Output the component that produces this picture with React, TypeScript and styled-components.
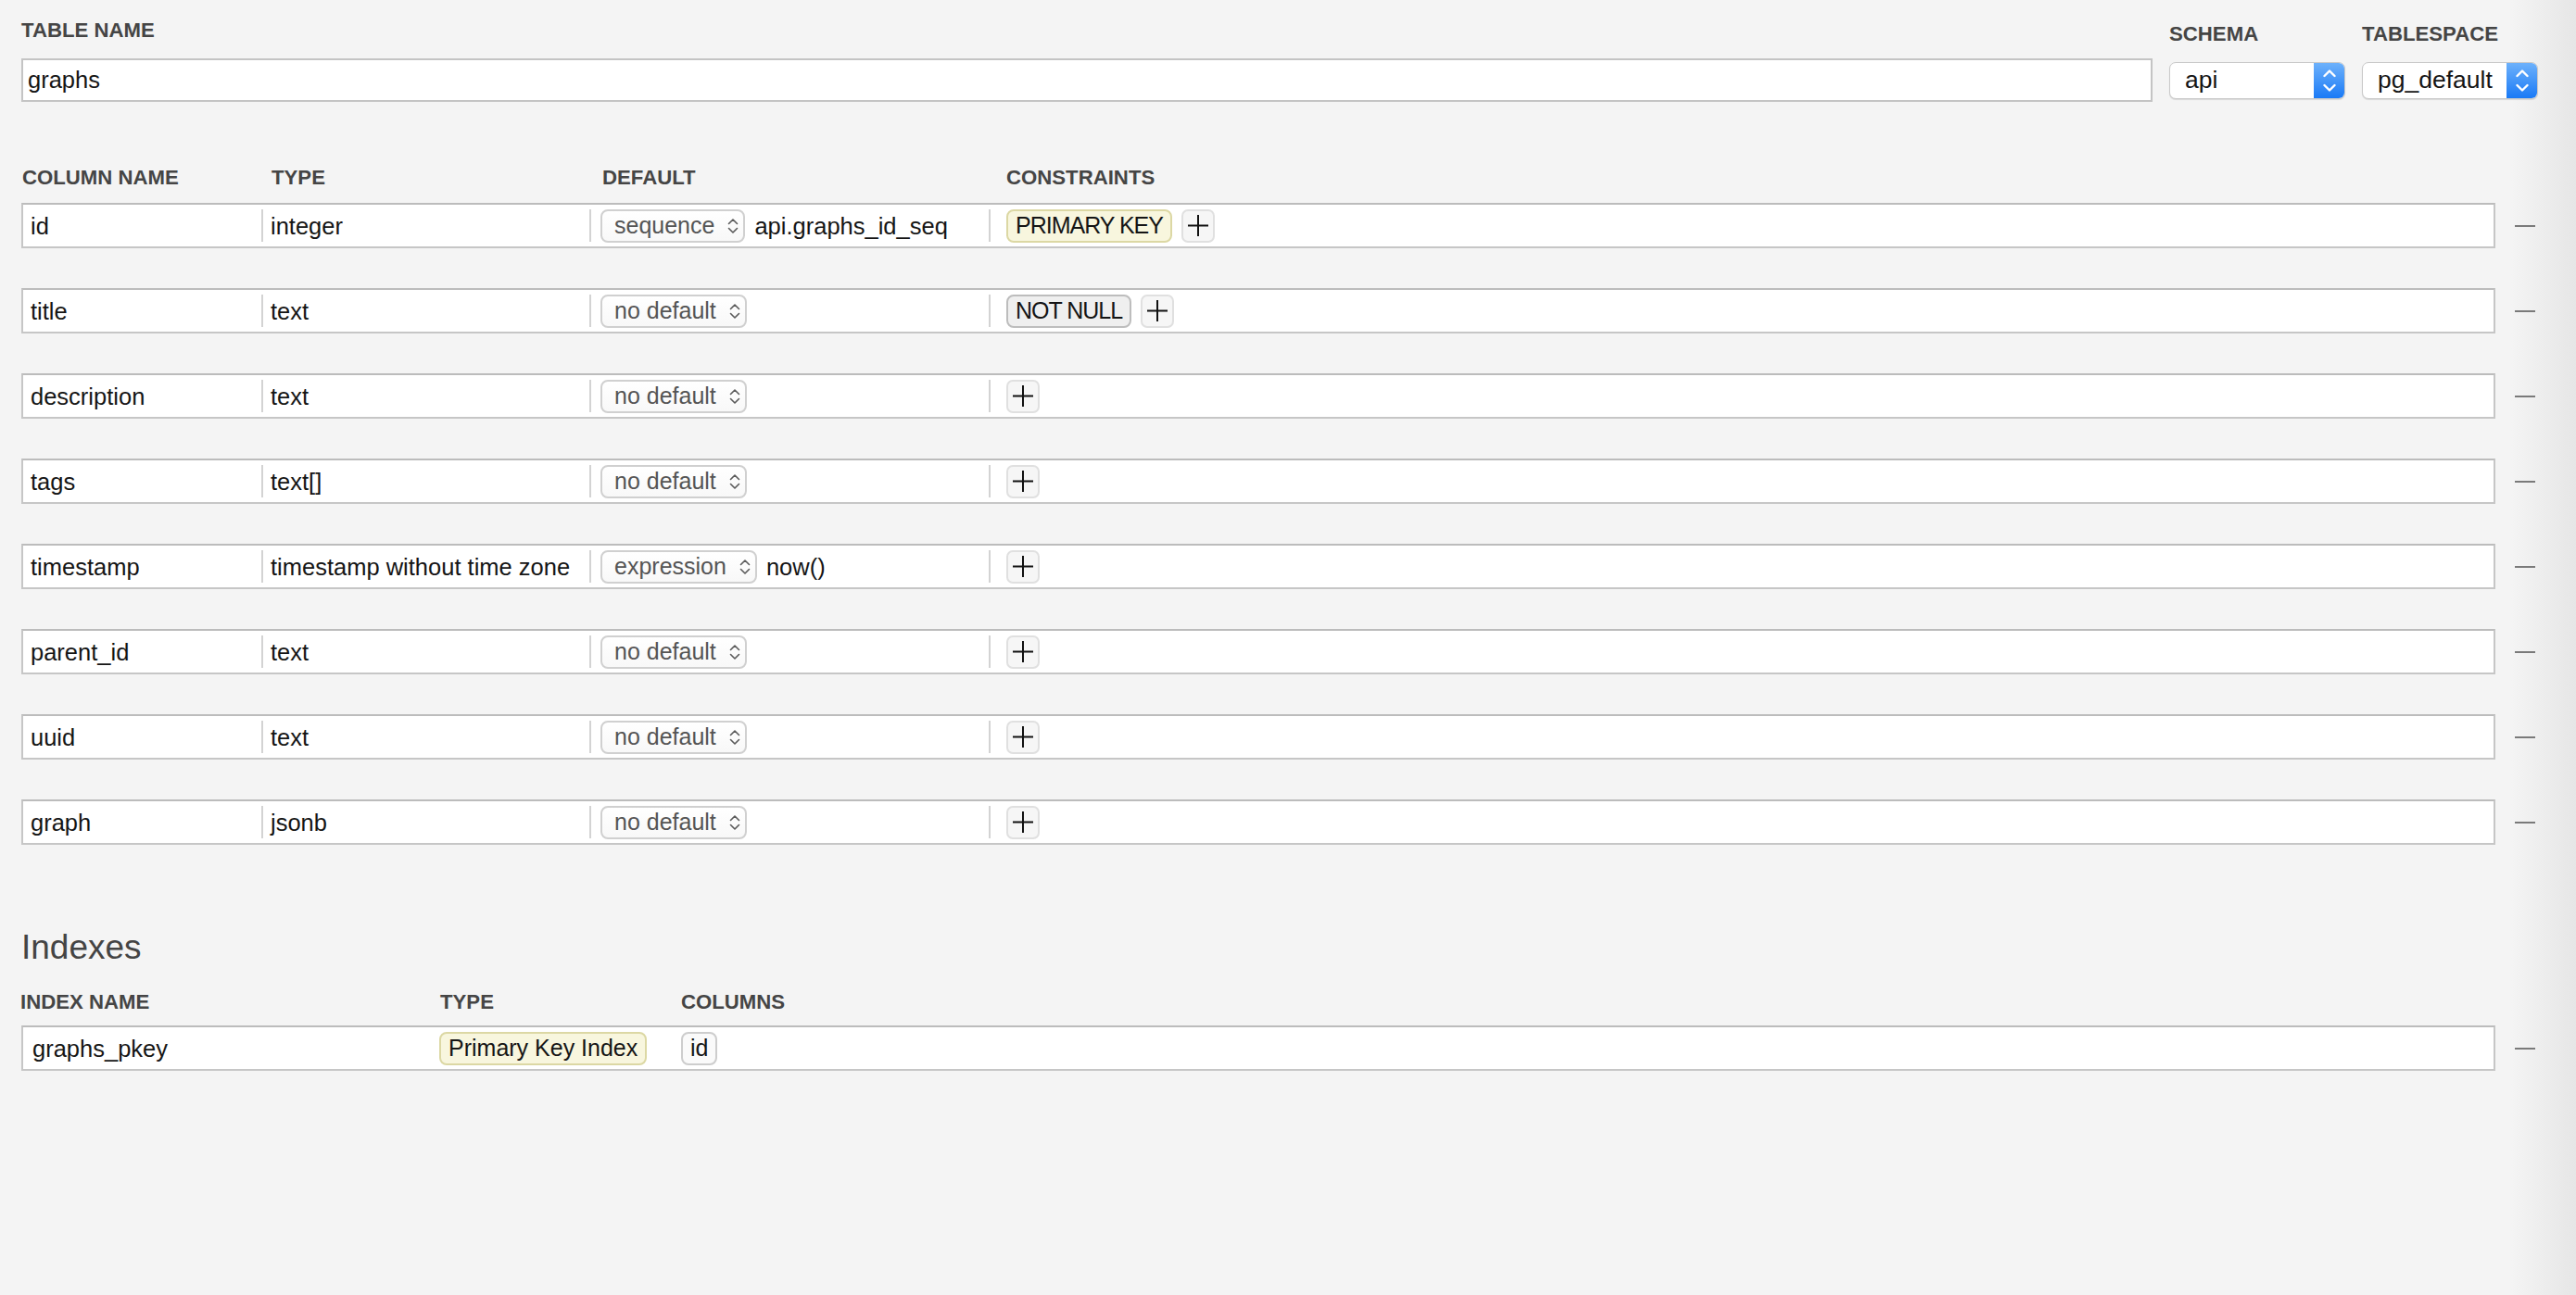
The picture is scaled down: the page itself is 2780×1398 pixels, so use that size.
import React from 'react';
import { styled, createGlobalStyle, css } from 'styled-components';

type Tone = 'key' | 'neutral' | 'plain';

type Constraint = {
    text: string;
    tone: Tone;
};

type ColumnDef = {
    name: string;
    type: string;
    defaultKind: string;
    defaultValue?: string;
    constraints: Constraint[];
};

const columns: ColumnDef[] = [
    { name: 'id', type: 'integer', defaultKind: 'sequence', defaultValue: 'api.graphs_id_seq', constraints: [{ text: 'PRIMARY KEY', tone: 'key' }] },
    { name: 'title', type: 'text', defaultKind: 'no default', constraints: [{ text: 'NOT NULL', tone: 'neutral' }] },
    { name: 'description', type: 'text', defaultKind: 'no default', constraints: [] },
    { name: 'tags', type: 'text[]', defaultKind: 'no default', constraints: [] },
    { name: 'timestamp', type: 'timestamp without time zone', defaultKind: 'expression', defaultValue: 'now()', constraints: [] },
    { name: 'parent_id', type: 'text', defaultKind: 'no default', constraints: [] },
    { name: 'uuid', type: 'text', defaultKind: 'no default', constraints: [] },
    { name: 'graph', type: 'jsonb', defaultKind: 'no default', constraints: [] },
];

const GlobalStyle = createGlobalStyle`
    html, body {
        margin: 0;
        padding: 0;
    }
    body {
        background: linear-gradient(to right, #f4f4f4 0, #f4f4f4 calc(100% - 70px), #e6e6e6 100%);
        font-family: "Liberation Sans", Arial, sans-serif;
        color: #151515;
    }
`;

const SmallChevrons = () => (
    <svg width="12" height="18" viewBox="0 0 12 18" fill="none" stroke="#5a5a5a" strokeWidth="1.6" strokeLinecap="round" strokeLinejoin="round">
        <polyline points="1.5,6.5 6,2 10.5,6.5" />
        <polyline points="1.5,11.5 6,16 10.5,11.5" />
    </svg>
);

const WhiteChevrons = () => (
    <svg width="14" height="26" viewBox="0 0 14 26" fill="none" stroke="#ffffff" strokeWidth="2.4" strokeLinecap="round" strokeLinejoin="round">
        <polyline points="1.5,8 7,2.5 12.5,8" />
        <polyline points="1.5,18 7,23.5 12.5,18" />
    </svg>
);

const PlusIcon = () => (
    <svg width="22" height="23" viewBox="0 0 22 23" stroke="#111" strokeWidth="2">
        <line x1="0" y1="11.5" x2="22" y2="11.5" />
        <line x1="11" y1="0" x2="11" y2="23" />
    </svg>
);

export default function App() {
    return (
        <>
            <GlobalStyle />
            <Page>
                <TopBar>
                    <Field $grow>
                        <Label>TABLE NAME</Label>
                        <TextInput>graphs</TextInput>
                    </Field>
                    <Field>
                        <Label>SCHEMA</Label>
                        <PopUp>
                            <PopUpValue>api</PopUpValue>
                            <PopUpArrow><WhiteChevrons /></PopUpArrow>
                        </PopUp>
                    </Field>
                    <Field>
                        <Label>TABLESPACE</Label>
                        <PopUp>
                            <PopUpValue>pg_default</PopUpValue>
                            <PopUpArrow><WhiteChevrons /></PopUpArrow>
                        </PopUp>
                    </Field>
                </TopBar>

                <ColumnHeader>
                    <Label>COLUMN NAME</Label>
                    <Label>TYPE</Label>
                    <Label>DEFAULT</Label>
                    <Label>CONSTRAINTS</Label>
                </ColumnHeader>

                <RowList>
                    {columns.map((column) => (
                        <Line key={column.name}>
                            <ColumnRow>
                                <Cell $inset={8} $divider>{column.name}</Cell>
                                <Cell $inset={8} $divider>{column.type}</Cell>
                                <Cell $inset={10} $divider>
                                    <SmallSelect>
                                        <span>{column.defaultKind}</span>
                                        <SmallChevrons />
                                    </SmallSelect>
                                    {column.defaultValue && <span>{column.defaultValue}</span>}
                                </Cell>
                                <Cell $inset={17}>
                                    {column.constraints.map((c) => (
                                        <Chip key={c.text} $tone={c.tone} $caps>{c.text}</Chip>
                                    ))}
                                    <AddButton><PlusIcon /></AddButton>
                                </Cell>
                            </ColumnRow>
                            <RemoveButton><Minus /></RemoveButton>
                        </Line>
                    ))}
                </RowList>

                <SectionTitle>Indexes</SectionTitle>

                <IndexHeader>
                    <Label>INDEX NAME</Label>
                    <Label>TYPE</Label>
                    <Label>COLUMNS</Label>
                </IndexHeader>

                <IndexLine>
                    <IndexRow>
                        <Cell $inset={10}>graphs_pkey</Cell>
                        <Cell $inset={0}><Chip $tone="key">Primary Key Index</Chip></Cell>
                        <Cell $inset={0}><Chip $tone="plain">id</Chip></Cell>
                    </IndexRow>
                    <RemoveButton><Minus /></RemoveButton>
                </IndexLine>
            </Page>
        </>
    );
}

const Page = styled.div`
    min-height: 100vh;
    box-sizing: border-box;
    padding: 20px 41px 40px 23px;
    font-size: 25.5px;
`;

const TopBar = styled.div`
    display: flex;
    align-items: center;
    gap: 18px;
`;

const Field = styled.div<{ $grow?: boolean }>`
    display: flex;
    flex-direction: column;
    gap: 17px;
    ${({ $grow }) => $grow ? css`flex: 1;` : css`width: 190px;`}
`;

const Label = styled.div`
    font-size: 22.2px;
    line-height: 26px;
    font-weight: bold;
    color: #454545;
    white-space: nowrap;
`;

const TextInput = styled.div`
    height: 47px;
    box-sizing: border-box;
    border: 2px solid #c4c4c4;
    background: #ffffff;
    padding: 0 5px;
    display: flex;
    align-items: center;
    font-size: 25.5px;
    color: #151515;
`;

const PopUp = styled.div`
    height: 40px;
    box-sizing: border-box;
    display: flex;
    border: 1px solid #c9c9c9;
    border-radius: 7px;
    background: #ffffff;
    box-shadow: 0 1px 1px rgba(0, 0, 0, 0.12);
    overflow: hidden;
`;

const PopUpValue = styled.div`
    flex: 1;
    padding-left: 16px;
    display: flex;
    align-items: center;
    font-size: 26.5px;
    color: #151515;
`;

const PopUpArrow = styled.div`
    width: 33px;
    display: flex;
    align-items: center;
    justify-content: center;
    background: linear-gradient(to bottom, #6db1fb, #1a7af6);
`;

const ColumnHeader = styled.div`
    margin-top: 69px;
    display: grid;
    grid-template-columns: 269px 357px 436px 1fr;
    padding-left: 1px;
`;

const RowList = styled.div`
    margin-top: 14px;
    display: flex;
    flex-direction: column;
    gap: 43px;
`;

const Line = styled.div`
    display: flex;
    align-items: center;
`;

const RowBox = styled.div`
    flex: 1;
    height: 49px;
    box-sizing: border-box;
    border: 2px solid #c6c6c6;
    border-top-color: #bcbcbc;
    background: #ffffff;
    display: grid;
    align-items: center;
`;

const ColumnRow = styled(RowBox)`
    grid-template-columns: 259px 354px 431px 1fr;
`;

const IndexRow = styled(RowBox)`
    grid-template-columns: 449px 261px 1fr;
`;

const Cell = styled.div<{ $inset: number; $divider?: boolean }>`
    height: 35px;
    display: flex;
    align-items: center;
    gap: 10px;
    padding-left: ${({ $inset }) => $inset}px;
    padding-top: 2px;
    box-sizing: border-box;
    white-space: nowrap;
    font-size: 25.5px;
    color: #151515;
    ${({ $divider }) => $divider && css`border-right: 2px solid #d3d3d3;`}
`;

const SmallSelect = styled.div`
    height: 36px;
    box-sizing: border-box;
    display: inline-flex;
    align-items: center;
    gap: 14px;
    padding: 0 5px 0 13px;
    margin-top: -2px;
    border: 2px solid #d0d0d0;
    border-radius: 8px;
    background: linear-gradient(to bottom, #ffffff, #f8f8f8);
    color: #555555;
    font-size: 25px;
`;

const chipTones: Record<Tone, { bg: string; border: string }> = {
    key: { bg: '#f8f6de', border: '#dcd8a4' },
    neutral: { bg: '#efefef', border: '#bdbdbd' },
    plain: { bg: '#fafafa', border: '#cdcdcd' },
};

const Chip = styled.span<{ $tone: Tone; $caps?: boolean }>`
    height: 36px;
    box-sizing: border-box;
    display: inline-flex;
    align-items: center;
    padding: 0 8px;
    margin-top: -2px;
    border: 2px solid ${({ $tone }) => chipTones[$tone].border};
    background: ${({ $tone }) => chipTones[$tone].bg};
    border-radius: 8px;
    font-size: 25px;
    color: #151515;
    ${({ $caps }) => $caps && css`letter-spacing: -1px;`}
`;

const AddButton = styled.span`
    width: 36px;
    height: 36px;
    box-sizing: border-box;
    margin-top: -2px;
    display: inline-flex;
    align-items: center;
    justify-content: center;
    border: 2px solid #e0e0e0;
    border-radius: 7px;
    background: #f6f6f6;
`;

const RemoveButton = styled.div`
    width: 46px;
    box-sizing: border-box;
    padding-left: 21px;
    display: flex;
    align-items: center;
`;

const Minus = styled.span`
    display: block;
    width: 22px;
    height: 2px;
    background: #7a7a7a;
`;

const SectionTitle = styled.div`
    margin-top: 89px;
    font-size: 37px;
    line-height: 44px;
    color: #444444;
`;

const IndexHeader = styled.div`
    margin-top: 24px;
    display: grid;
    grid-template-columns: 453px 260px 1fr;
    margin-left: -1px;
`;

const IndexLine = styled(Line)`
    margin-top: 12px;
`;
